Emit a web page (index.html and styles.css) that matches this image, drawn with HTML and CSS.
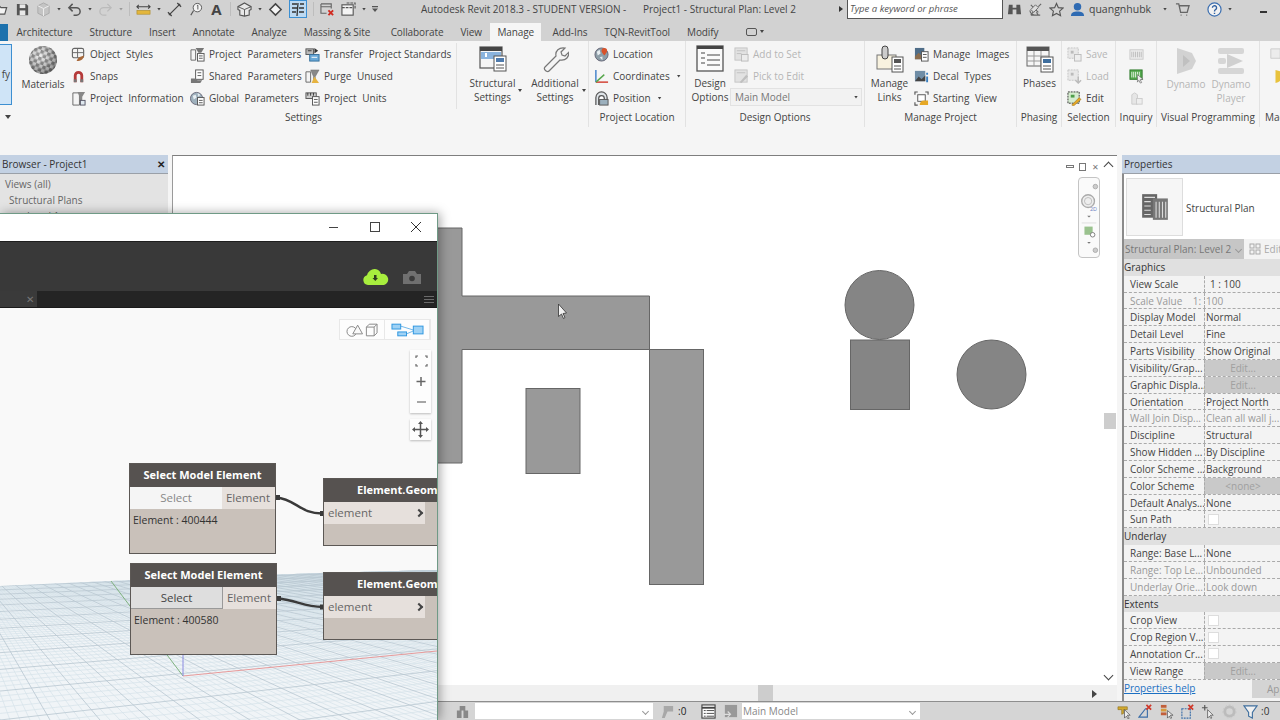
FILE: index.html
```html
<!DOCTYPE html>
<html lang="en">
<head>
  <meta charset="UTF-8">
  <title>Autodesk Revit 2018.3 - Project1 - Structural Plan: Level 2</title>
  <link rel="stylesheet" href="styles.css">
</head>
<body>
  <!-- icon sheet -->
  <svg class="icon-sheet" aria-hidden="true">
    <defs>
      <pattern id="checks" width="7" height="7" patternUnits="userSpaceOnUse" patternTransform="rotate(20)">
        <rect width="7" height="7" fill="#e4e4e4"/>
        <rect width="3.5" height="3.5" fill="#666"/>
        <rect x="3.5" y="3.5" width="3.5" height="3.5" fill="#666"/>
      </pattern>
      <radialGradient id="shade" cx="40%" cy="35%" r="70%">
        <stop offset="0" stop-color="#fff" stop-opacity=".35"/>
        <stop offset="1" stop-color="#333" stop-opacity=".5"/>
      </radialGradient>
    </defs>
    <symbol id="i-folder" viewBox="0 0 16 16"><path d="M1 4h5l2 2h6l-2 7H1z" fill="#f4f4f4" stroke="#555" stroke-width="1.3"/></symbol>
    <symbol id="i-save" viewBox="0 0 16 16"><path d="M2 2h10l2 2v10H2z" fill="#555"/><rect x="5" y="2.5" width="6" height="4" fill="#e8e8e8"/><rect x="5" y="9" width="6" height="5" fill="#e8e8e8"/></symbol>
    <symbol id="i-cube" viewBox="0 0 16 16"><path d="M8 1l6 3v8l-6 3-6-3V4z" fill="#c4c4c4" stroke="#aaa"/><path d="M2 4l6 3 6-3M8 7v8" fill="none" stroke="#eee"/></symbol>
    <symbol id="i-undo" viewBox="0 0 16 16"><path d="M6 2L2 6l4 4M2 6h8a4 4 0 0 1 0 8H7" fill="none" stroke="#555" stroke-width="1.6"/></symbol>
    <symbol id="i-redo" viewBox="0 0 16 16"><path d="M10 2l4 4-4 4M14 6H6a4 4 0 0 0 0 8h3" fill="none" stroke="#bbb" stroke-width="1.4"/></symbol>
    <symbol id="i-measure" viewBox="0 0 16 16"><path d="M1 5h14M3 3l-2 2 2 2M13 3l2 2-2 2" fill="none" stroke="#444" stroke-width="1.2"/><rect x="1" y="9" width="14" height="4" fill="#e3b63c" stroke="#a98620" stroke-width=".6"/></symbol>
    <symbol id="i-dim" viewBox="0 0 16 16"><path d="M2 14L14 2" stroke="#444" stroke-width="1.4"/><path d="M1 11l4 4M11 1l4 4" stroke="#444" stroke-width="1.4"/></symbol>
    <symbol id="i-tag" viewBox="0 0 16 16"><circle cx="10" cy="6" r="4.5" fill="#f4f4f4" stroke="#555"/><path d="M6 9l-3 5" stroke="#555" stroke-width="1.2"/><path d="M9.5 4l1-.6V8" fill="none" stroke="#555"/></symbol>
    <symbol id="i-house" viewBox="0 0 16 16"><path d="M8 1l7 4v3l-2 1v5l-5 1-5-1V9L1 8V5z" fill="#e8e8e8" stroke="#555" stroke-width="1.2"/><path d="M1 5l7 3 7-3M8 8v7" fill="none" stroke="#555"/></symbol>
    <symbol id="i-section" viewBox="0 0 16 16"><path d="M8 2l6 6-6 6-6-6z" fill="#f4f4f4" stroke="#444" stroke-width="1.6"/></symbol>
    <symbol id="i-thin" viewBox="0 0 18 18"><rect x=".5" y=".5" width="17" height="17" fill="#bcd9f2" stroke="#3b8fd3"/><path d="M3 4h5M3 8h5M3 12h4M11 4h4M10 8h5M10 12h5M9 3l-1 13" stroke="#333" stroke-width="1.3"/></symbol>
    <symbol id="i-closeview" viewBox="0 0 16 16"><path d="M1 2h11v5M1 2v10h6M1 5h11" fill="none" stroke="#666" stroke-width="1.2"/><path d="M9 9l5 5M14 9l-5 5" stroke="#d02a20" stroke-width="2"/></symbol>
    <symbol id="i-switch" viewBox="0 0 16 16"><rect x="1" y="3" width="12" height="11" fill="#f4f4f4" stroke="#555" stroke-width="1.2"/><path d="M1 6h12M6 1h9v7" fill="none" stroke="#555" stroke-width="1.2" stroke-dasharray="3 1"/></symbol>
    <symbol id="i-binoc" viewBox="0 0 16 16"><path d="M2 3h4v3h4V3h4l1 10h-5V8H6v5H1z" fill="#555"/></symbol>
    <symbol id="i-sat" viewBox="0 0 16 16"><path d="M3 3l8 8M2 9a6 6 0 0 0 5 5M11 5l3-3M3 14h10M6 10l-3 4M9 11l2 3" fill="none" stroke="#666" stroke-width="1.2"/><path d="M3 8l5-5 3 3-5 5z" fill="#ddd" stroke="#666"/></symbol>
    <symbol id="i-star" viewBox="0 0 16 16"><path d="M8 1.5l2 4.5 5 .5-3.700 3.300 1 4.800L8 12.200 3.700 14.600l1-4.800L1 6.500l5-.5z" fill="none" stroke="#555" stroke-width="1.2"/></symbol>
    <symbol id="i-user" viewBox="0 0 16 16"><circle cx="8" cy="5" r="4" fill="#2f6bb3"/><path d="M1 15c0-4 3-5 7-5s7 1 7 5z" fill="#2f6bb3"/></symbol>
    <symbol id="i-cart" viewBox="0 0 16 16"><path d="M1 2h3l2 9h7l2-7H5M6 14h1M12 14h1" fill="none" stroke="#666" stroke-width="1.4"/></symbol>
    <symbol id="i-help" viewBox="0 0 16 16"><circle cx="8" cy="8" r="7" fill="#f2f2f2" stroke="#3c6fb0" stroke-width="1.3"/><path d="M5.800 6.200a2.200 2.200 0 1 1 3.400 1.800c-.8.500-1.200 1-1.200 2M8 11.500v1.300" fill="none" stroke="#2f5f9f" stroke-width="1.500"/></symbol>

    <symbol id="i-styles" viewBox="0 0 16 16"><rect x="1.500" y="1.500" width="12" height="10" rx="2" fill="#f4f4f4" stroke="#666" stroke-width="1.2"/><path d="M7 1.500v10M1.500 6h12" stroke="#666"/><path d="M6 15c1-3 3-5 8-6-1 4-3 6-8 6z" fill="#a8683a"/></symbol>
    <symbol id="i-snaps" viewBox="0 0 16 16"><path d="M3 14V7a5 5 0 0 1 10 0v7h-3V7a2 2 0 0 0-4 0v7z" fill="#b53a3a"/><rect x="3" y="11" width="3" height="3" fill="#777"/><rect x="10" y="11" width="3" height="3" fill="#777"/></symbol>
    <symbol id="i-info" viewBox="0 0 16 16"><path d="M2 2h7v13H2z" fill="#f4f4f4" stroke="#666"/><path d="M7 1h8l-3 5v4H9V6z" fill="#888"/><rect x="10" y="10" width="5" height="5" fill="#dfe8ef" stroke="#556"/></symbol>
    <symbol id="i-params" viewBox="0 0 16 16"><path d="M1 3h5v11H1z" fill="#f4f4f4" stroke="#666"/><path d="M6 1h9l-3 5H9z" fill="#777"/><rect x="8" y="7" width="7" height="8" fill="#fff" stroke="#555"/><path d="M9.500 9.500h4M9.500 12h4" stroke="#555"/></symbol>
    <symbol id="i-shared" viewBox="0 0 16 16"><rect x="6" y="1" width="8" height="10" fill="#fff" stroke="#555"/><path d="M8 4h4M8 7h4" stroke="#555"/><path d="M1 10h4l3 2h5l-2 3H1z" fill="#777"/></symbol>
    <symbol id="i-global" viewBox="0 0 16 16"><circle cx="7" cy="8" r="6.500" fill="#9fb1bd" stroke="#667"/><path d="M3 5l3-1 1 3-3 2zM8 2l3 2-2 2z" fill="#e8eef2"/><rect x="8" y="7" width="7" height="8" fill="#fff" stroke="#555"/><path d="M9.500 10h4M9.500 12.500h4" stroke="#555"/></symbol>
    <symbol id="i-transfer" viewBox="0 0 16 16"><rect x="1" y="2" width="8" height="6" fill="#bbb" stroke="#555"/><path d="M3 4h4" stroke="#333"/><path d="M10 1l4 3-4 3z" fill="#333"/><rect x="5" y="8" width="10" height="7" fill="#6aa9d8" stroke="#356f9c"/><path d="M7 11h6" stroke="#fff"/></symbol>
    <symbol id="i-purge" viewBox="0 0 16 16"><path d="M1 3h5v11H1z" fill="#f4f4f4" stroke="#666"/><path d="M6 1h9l-4 7v6H9V8z" fill="#888" stroke="#666" stroke-width=".5"/><path d="M10 8l5 7H7z" fill="#e6b340"/></symbol>
    <symbol id="i-units" viewBox="0 0 16 16"><rect x="1" y="2" width="11" height="6" fill="#ccc" stroke="#555"/><path d="M3 2v3M6 2v3M9 2v3" stroke="#333"/><rect x="8" y="6" width="7" height="9" fill="#fff" stroke="#555"/><path d="M9.500 9h4M9.500 12h4" stroke="#555"/></symbol>
    <symbol id="i-location" viewBox="0 0 16 16"><circle cx="8" cy="8" r="7" fill="#8d9ea8" stroke="#667"/><path d="M3 5l3-2 1 4-3 2zM6 11l3-1v4z" fill="#e8eef2"/><path d="M11 1a3 3 0 0 1 3 3c0 2-3 5-3 5s-3-3-3-5a3 3 0 0 1 3-3z" fill="#d8522a"/></symbol>
    <symbol id="i-coords" viewBox="0 0 16 16"><path d="M2 1v13" stroke="#3c7ec9" stroke-width="1.500"/><path d="M2 14h13" stroke="#d0392b" stroke-width="1.500"/><path d="M2 14L11 6" stroke="#56a64b" stroke-width="1.500"/></symbol>
    <symbol id="i-position" viewBox="0 0 16 16"><path d="M2 15V7a6 6 0 0 1 12 0v8" fill="#dfe4e8" stroke="#555" stroke-width="1.300"/><path d="M5 15V8a3 3 0 0 1 6 0v7" fill="#fff" stroke="#555" stroke-width="1.300"/><rect x="6" y="9" width="9" height="6" fill="#9cb0bd" stroke="#555"/></symbol>
    <symbol id="i-addset" viewBox="0 0 16 16"><rect x="1" y="1" width="13" height="13" fill="#e2e2e2" stroke="#c4c4c4"/><path d="M3 4h9M3 7h5" stroke="#c0c0c0"/><rect x="8" y="8" width="7" height="7" fill="#ececec" stroke="#bbb"/></symbol>
    <symbol id="i-pick" viewBox="0 0 16 16"><rect x="1" y="1" width="13" height="13" fill="#e2e2e2" stroke="#c4c4c4"/><path d="M3 4h9" stroke="#c0c0c0"/><path d="M6 14l7-8 2 2-7 7z" fill="#bfbfbf"/></symbol>
    <symbol id="i-images" viewBox="0 0 16 16"><rect x="1" y="1" width="10" height="12" fill="#4f6d88"/><path d="M1 10l4-4 3 3 3-2v6H1z" fill="#8a6d4f"/><rect x="8" y="5" width="7" height="10" fill="#fff" stroke="#555"/><path d="M9.500 8h4M9.500 11h4" stroke="#555"/></symbol>
    <symbol id="i-decal" viewBox="0 0 16 16"><rect x="1" y="2" width="11" height="11" fill="#6f8da6"/><path d="M1 13l4-5 3 3 4-4v6z" fill="#444"/><path d="M13 4h2v2h-2zM13 8h2v6h-2z" fill="#3a7fc0"/></symbol>
    <symbol id="i-start" viewBox="0 0 16 16"><path d="M1 4V1h3M12 1h3v3M1 12v3h3" fill="none" stroke="#555" stroke-width="1.200"/><rect x="4" y="4" width="8" height="7" fill="#fff" stroke="#555"/><path d="M6 15c0-3 2-5 5-5h4v5z" fill="#e6a825"/></symbol>
    <symbol id="i-sel-save" viewBox="0 0 16 16"><rect x="1" y="1" width="11" height="11" fill="#e8e8e8" stroke="#c4c4c4" stroke-dasharray="2 1"/><rect x="4" y="4" width="3" height="3" fill="#bbb"/><rect x="8" y="8" width="7" height="7" fill="#eee" stroke="#bbb"/></symbol>
    <symbol id="i-sel-load" viewBox="0 0 16 16"><rect x="1" y="1" width="11" height="11" fill="#e8e8e8" stroke="#c4c4c4" stroke-dasharray="2 1"/><rect x="4" y="4" width="3" height="3" fill="#bbb"/><path d="M12 8v7M9 12l3 3 3-3" fill="none" stroke="#bbb" stroke-width="1.500"/></symbol>
    <symbol id="i-sel-edit" viewBox="0 0 16 16"><rect x="1" y="1" width="12" height="12" fill="#d6ecd0" stroke="#333" stroke-dasharray="2 1"/><rect x="4" y="4" width="4" height="3" fill="#4e9e4a"/><path d="M5 15l8-8 2 2-8 7z" fill="#e6a825" stroke="#8a6a20" stroke-width=".5"/></symbol>
    <symbol id="i-inq1" viewBox="0 0 16 16"><rect x="1" y="3" width="14" height="10" fill="#eee" stroke="#c8c8c8"/><path d="M3 5v6M5 5v6M7 5v6M9 5v6M11 5v6M13 5v6" stroke="#bbb"/></symbol>
    <symbol id="i-inq2" viewBox="0 0 16 16"><rect x="1" y="1" width="13" height="10" fill="#55a94f" stroke="#2f7a2b"/><path d="M3 3v6M5 3v6M7 3v6M9 3v6M11 3v6" stroke="#e5f3e3"/><path d="M9 6l6 5-3 .5 1.500 3-1.500.5-1.500-3L9 14z" fill="#eee" stroke="#555" stroke-width=".6"/></symbol>
    <symbol id="i-inq3" viewBox="0 0 16 16"><path d="M3 14V4l3-2 3 2v10z" fill="#e6e6e6" stroke="#ccc"/><rect x="8" y="8" width="6" height="6" fill="#eee" stroke="#ccc"/></symbol>
    <symbol id="i-lic" viewBox="0 0 16 16"><path d="M3 2h10v10H3z" fill="#ececec" stroke="#ccc"/></symbol>
    <symbol id="i-shield" viewBox="0 0 16 16"><path d="M8 1l7 2v5c0 4-3 6-7 7z" fill="#e8c23c"/></symbol>

    <symbol id="b-structural" viewBox="0 0 28 28"><rect x="1" y="2" width="22" height="21" fill="#f6f6f6" stroke="#555" stroke-width="1.200"/><rect x="1" y="2" width="22" height="4" fill="#444"/><rect x="2" y="7" width="20" height="7" fill="#8ab3dd"/><path d="M7 8v4" stroke="#fff" stroke-width="2"/><rect x="15" y="11" width="12" height="15" fill="#fff" stroke="#555"/><rect x="17" y="13" width="8" height="4" fill="#4f7bad"/><path d="M17 20h8M17 23h8" stroke="#555"/></symbol>
    <symbol id="b-wrench" viewBox="0 0 28 28"><path d="M24 3l-4 4 1 3 3 1 4-4c0 5-3 9-9 8L8 26c-2 2-6-2-4-4L15 11c-1-5 3-9 9-8z" fill="#f4f4f4" stroke="#777" stroke-width="1.200"/></symbol>
    <symbol id="b-design" viewBox="0 0 28 28"><rect x="1" y="1" width="26" height="25" fill="#fafafa" stroke="#555" stroke-width="1.300"/><rect x="1" y="1" width="26" height="3" fill="#444"/><path d="M5 8h4M5 13h4M5 18h4M11 10h13M11 15h13M11 20h13" stroke="#444" stroke-width="1.200"/></symbol>
    <symbol id="b-links" viewBox="0 0 28 28"><rect x="1" y="10" width="19" height="14" fill="#f8f2df" stroke="#777"/><rect x="6" y="1" width="6" height="13" rx="3" fill="#ccc" stroke="#444"/><rect x="16" y="12" width="11" height="15" fill="#fff" stroke="#555"/><rect x="18" y="14" width="7" height="4" fill="#555"/><path d="M18 21h7M18 24h7" stroke="#555"/></symbol>
    <symbol id="b-phases" viewBox="0 0 28 28"><rect x="1" y="2" width="22" height="19" fill="#f6f6f6" stroke="#666"/><rect x="1" y="2" width="22" height="4" fill="#555"/><path d="M1 11h22M1 16h22M8 6v15M15 6v15" stroke="#999"/><rect x="15" y="12" width="12" height="15" fill="#fff" stroke="#555"/><rect x="17" y="14" width="8" height="4" fill="#3f6f9f"/><path d="M17 21h8M17 24h8" stroke="#555"/></symbol>
    <symbol id="b-dynamo" viewBox="0 0 28 28"><path d="M5 1l15 5 4 8-4 8-15 5z" fill="#d2d2d2"/><path d="M11 8l7 6-7 6z" fill="#c0c0c0"/></symbol>
    <symbol id="b-player" viewBox="0 0 28 28"><rect x="1" y="1" width="26" height="6" rx="2" fill="#d6d6d6"/><rect x="1" y="21" width="26" height="6" rx="2" fill="#d6d6d6"/><rect x="1" y="11" width="8" height="6" rx="2" fill="#d6d6d6"/><path d="M10 7l16 7-16 7z" fill="#d0d0d0"/></symbol>
  </svg>

  <!-- title bar -->
  <header class="titlebar">
    <div class="qat">
      <svg class="ic ic-first"><use href="#i-folder"/></svg>
      <svg class="ic"><use href="#i-save"/></svg>
      <svg class="ic"><use href="#i-cube"/></svg>
      <span class="dd"></span>
      <svg class="ic"><use href="#i-undo"/></svg>
      <span class="dd"></span>
      <svg class="ic"><use href="#i-redo"/></svg>
      <span class="dd dd-faded"></span>
      <span class="qat-sep"></span>
      <svg class="ic"><use href="#i-measure"/></svg>
      <span class="dd"></span>
      <svg class="ic"><use href="#i-dim"/></svg>
      <svg class="ic"><use href="#i-tag"/></svg>
      <span class="qat-a">A</span>
      <span class="qat-sep"></span>
      <svg class="ic"><use href="#i-house"/></svg>
      <span class="dd"></span>
      <svg class="ic"><use href="#i-section"/></svg>
      <svg class="ic ic-18"><use href="#i-thin"/></svg>
      <span class="qat-sep"></span>
      <svg class="ic"><use href="#i-closeview"/></svg>
      <svg class="ic"><use href="#i-switch"/></svg>
      <span class="dd"></span>
      <span class="dd dd-bar"></span>
    </div>
    <div class="app-title">
      <span>Autodesk Revit 2018.3 - STUDENT VERSION -</span>
      <span class="app-doc">Project1 - Structural Plan: Level 2</span>
    </div>
    <span class="arrow-right"></span>
    <div class="search">Type a keyword or phrase</div>
    <div class="infobar">
      <svg class="ic"><use href="#i-binoc"/></svg>
      <svg class="ic"><use href="#i-sat"/></svg>
      <svg class="ic"><use href="#i-star"/></svg>
      <svg class="ic"><use href="#i-user"/></svg>
      <span class="username">quangnhubk</span>
      <span class="dd dd-user"></span>
      <svg class="ic ic-cart"><use href="#i-cart"/></svg>
      <svg class="ic ic-help"><use href="#i-help"/></svg>
      <span class="dd"></span>
      <span class="win-min"></span>
      <span class="win-restore"></span>
    </div>
  </header>

  <!-- ribbon tabs -->
  <nav class="tabs">
    <span class="tab-file"></span>
    <span class="tab">Architecture</span>
    <span class="tab">Structure</span>
    <span class="tab">Insert</span>
    <span class="tab">Annotate</span>
    <span class="tab">Analyze</span>
    <span class="tab tab-wide">Massing &amp; Site</span>
    <span class="tab">Collaborate</span>
    <span class="tab">View</span>
    <span class="tab tab-active">Manage</span>
    <span class="tab">Add-Ins</span>
    <span class="tab">TQN-RevitTool</span>
    <span class="tab">Modify</span>
    <span class="tab-toggle"><span class="tab-toggle-box"></span><span class="dd"></span></span>
  </nav>

  <!-- ribbon -->
  <section class="ribbon">
    <div class="panel panel-modify">
      <div class="panel-body"><div class="modify-btn">fy</div></div>
      <div class="panel-title"><span class="dd"></span></div>
    </div>

    <div class="panel panel-settings">
      <div class="panel-body">
        <div class="big big-materials">
          <svg class="material" viewBox="0 0 30 30"><circle cx="15" cy="15" r="14" fill="url(#checks)"/><circle cx="15" cy="15" r="14" fill="url(#shade)"/></svg>
          <span>Materials</span>
        </div>
        <div class="col col-a">
          <div class="item"><svg class="ic"><use href="#i-styles"/></svg><span>Object Styles</span></div>
          <div class="item"><svg class="ic"><use href="#i-snaps"/></svg><span>Snaps</span></div>
          <div class="item"><svg class="ic"><use href="#i-info"/></svg><span>Project Information</span></div>
        </div>
        <div class="col col-b">
          <div class="item"><svg class="ic"><use href="#i-params"/></svg><span>Project Parameters</span></div>
          <div class="item"><svg class="ic"><use href="#i-shared"/></svg><span>Shared Parameters</span></div>
          <div class="item"><svg class="ic"><use href="#i-global"/></svg><span>Global Parameters</span></div>
        </div>
        <div class="col col-c">
          <div class="item"><svg class="ic"><use href="#i-transfer"/></svg><span>Transfer <span class="tight">Project Standards</span></span></div>
          <div class="item"><svg class="ic"><use href="#i-purge"/></svg><span>Purge Unused</span></div>
          <div class="item"><svg class="ic"><use href="#i-units"/></svg><span>Project Units</span></div>
        </div>
        <div class="big big-structural">
          <svg class="ic-big"><use href="#b-structural"/></svg>
          <span>Structural<br>Settings</span><i class="dd dd-big"></i>
        </div>
        <div class="big big-additional">
          <svg class="ic-big"><use href="#b-wrench"/></svg>
          <span>Additional<br>Settings</span><i class="dd dd-big"></i>
        </div>
      </div>
      <div class="panel-title">Settings</div>
    </div>

    <div class="panel panel-location">
      <div class="panel-body">
        <div class="col">
          <div class="item"><svg class="ic"><use href="#i-location"/></svg><span>Location</span></div>
          <div class="item"><svg class="ic"><use href="#i-coords"/></svg><span>Coordinates</span><i class="dd"></i></div>
          <div class="item"><svg class="ic"><use href="#i-position"/></svg><span>Position</span><i class="dd"></i></div>
        </div>
      </div>
      <div class="panel-title">Project Location</div>
    </div>

    <div class="panel panel-design">
      <div class="panel-body">
        <div class="big big-design">
          <svg class="ic-big"><use href="#b-design"/></svg>
          <span>Design<br>Options</span>
        </div>
        <div class="col col-design">
          <div class="item item-off"><svg class="ic"><use href="#i-addset"/></svg><span>Add to Set</span></div>
          <div class="item item-off"><svg class="ic"><use href="#i-pick"/></svg><span>Pick to Edit</span></div>
          <div class="model-select"><span>Main Model</span><i class="dd"></i></div>
        </div>
      </div>
      <div class="panel-title">Design Options</div>
    </div>

    <div class="panel panel-project">
      <div class="panel-body">
        <div class="big big-links">
          <svg class="ic-big"><use href="#b-links"/></svg>
          <span>Manage<br>Links</span>
        </div>
        <div class="col">
          <div class="item"><svg class="ic"><use href="#i-images"/></svg><span>Manage Images</span></div>
          <div class="item"><svg class="ic"><use href="#i-decal"/></svg><span>Decal Types</span></div>
          <div class="item"><svg class="ic"><use href="#i-start"/></svg><span>Starting View</span></div>
        </div>
      </div>
      <div class="panel-title">Manage Project</div>
    </div>

    <div class="panel panel-phasing">
      <div class="panel-body">
        <div class="big big-phases">
          <svg class="ic-big"><use href="#b-phases"/></svg>
          <span>Phases</span>
        </div>
      </div>
      <div class="panel-title">Phasing</div>
    </div>

    <div class="panel panel-selection">
      <div class="panel-body">
        <div class="col">
          <div class="item item-off"><svg class="ic"><use href="#i-sel-save"/></svg><span>Save</span></div>
          <div class="item item-off"><svg class="ic"><use href="#i-sel-load"/></svg><span>Load</span></div>
          <div class="item"><svg class="ic"><use href="#i-sel-edit"/></svg><span>Edit</span></div>
        </div>
      </div>
      <div class="panel-title">Selection</div>
    </div>

    <div class="panel panel-inquiry">
      <div class="panel-body">
        <div class="col col-inquiry">
          <div class="item"><svg class="ic"><use href="#i-inq1"/></svg></div>
          <div class="item"><svg class="ic"><use href="#i-inq2"/></svg></div>
          <div class="item"><svg class="ic"><use href="#i-inq3"/></svg></div>
        </div>
      </div>
      <div class="panel-title">Inquiry</div>
    </div>

    <div class="panel panel-visual">
      <div class="panel-body">
        <div class="big big-dynamo big-off">
          <svg class="ic-big"><use href="#b-dynamo"/></svg>
          <span>Dynamo</span>
        </div>
        <div class="big big-player big-off">
          <svg class="ic-big"><use href="#b-player"/></svg>
          <span>Dynamo<br>Player</span>
        </div>
      </div>
      <div class="panel-title">Visual Programming</div>
    </div>

    <div class="panel panel-macros">
      <div class="panel-body">
        <div class="col col-macros">
          <div class="item"><svg class="ic"><use href="#i-lic"/></svg></div>
          <div class="item"><svg class="ic"><use href="#i-shield"/></svg></div>
        </div>
      </div>
      <div class="panel-title">Macros</div>
    </div>
  </section>

  <!-- workspace -->
  <main class="workspace">
    <aside class="browser">
      <div class="panel-head">Browser - Project1<span class="head-close">&#10005;</span></div>
      <ul class="tree">
        <li>Views (all)</li>
        <li class="tree-2">Structural Plans</li>
        <li class="tree-3">Level 1</li>
      </ul>
    </aside>

    <section class="view">
      <div class="view-main">
        <svg class="plan" viewBox="173 156 928 529">
          <path class="wall" d="M430 228H462V296H649.500V349.500H462V463H430Z"/>
          <rect class="wall" x="649.500" y="349.500" width="54" height="235"/>
          <rect class="wall" x="526" y="388.500" width="54" height="85"/>
          <circle class="column" cx="879.500" cy="305" r="34.500"/>
          <rect class="column" x="850.500" y="340" width="59" height="69.500"/>
          <circle class="column" cx="991.500" cy="374.500" r="34.500"/>
          <path class="cursor" d="M558.500 304V316.500L561.500 314L563.500 318.500L565 317.500L563 313.500L566.500 313Z"/>
        </svg>
        <div class="view-ctrl">
          <span class="ctrl-min"></span><span class="ctrl-max"></span><span class="ctrl-close">&#10005;</span>
        </div>
        <div class="navbar">
          <svg viewBox="0 0 22 80">
            <circle cx="18" cy="6" r="2.500" fill="#ccc" stroke="#aaa"/>
            <circle cx="10" cy="22" r="7" fill="#eee" stroke="#aaa" stroke-width="1.500"/>
            <circle cx="10" cy="22" r="4" fill="none" stroke="#bbb"/>
            <text x="12" y="33" class="nav-2d">2D</text>
            <path d="M9 38l2 2 2-2z" fill="#777"/>
            <path d="M3 46h16" stroke="#ddd"/>
            <rect x="6" y="50" width="9" height="9" fill="#9ac28e"/>
            <circle cx="15" cy="59" r="2.500" fill="#fff" stroke="#777"/>
            <path d="M9 67l2 2 2-2z" fill="#777"/>
            <circle cx="18" cy="76" r="2.500" fill="#ccc" stroke="#aaa"/>
          </svg>
        </div>
        <div class="vscroll">
          <span class="chev chev-up"></span>
          <span class="vthumb"></span>
          <span class="chev chev-down"></span>
        </div>
      </div>
      <div class="hscroll">
        <span class="hthumb"></span>
        <span class="chev-right"></span>
      </div>
    </section>

    <aside class="props">
      <div class="panel-head">Properties</div>
      <div class="props-body">
        <div class="type-box">
          <div class="type-thumb">
            <svg viewBox="0 0 28 28"><rect x="2" y="2" width="14" height="22" fill="#666"/><rect x="12" y="6" width="14" height="20" fill="#777"/><path d="M4 5h10M4 9h6M4 13h6M4 17h6M4 21h6M15 9v15M18 9v15M21 9v15M24 9v15" stroke="#ddd"/></svg>
          </div>
          <span>Structural Plan</span>
        </div>
        <div class="type-select">
          <div class="type-name"><span>Structural Plan: Level 2</span><i class="chev-small"></i></div>
          <div class="type-edit"><svg viewBox="0 0 12 12"><rect x="1" y="1" width="4" height="4" fill="none" stroke="#aaa"/><rect x="7" y="1" width="4" height="4" fill="none" stroke="#aaa"/><rect x="1" y="7" width="4" height="4" fill="none" stroke="#aaa"/><rect x="7" y="7" width="4" height="4" fill="none" stroke="#aaa"/></svg><span>Edit Type</span></div>
        </div>
        <div class="prop-group">Graphics</div>
        <div class="prop"><span class="prop-name">View Scale</span><span class="prop-val prop-pad">1 : 100</span></div>
        <div class="prop prop-off"><span class="prop-name">Scale Value &nbsp;&nbsp;&nbsp;1:</span><span class="prop-val">100</span></div>
        <div class="prop"><span class="prop-name">Display Model</span><span class="prop-val">Normal</span></div>
        <div class="prop"><span class="prop-name">Detail Level</span><span class="prop-val">Fine</span></div>
        <div class="prop"><span class="prop-name">Parts Visibility</span><span class="prop-val">Show Original</span></div>
        <div class="prop"><span class="prop-name">Visibility/Grap...</span><span class="prop-val prop-btn">Edit...</span></div>
        <div class="prop"><span class="prop-name">Graphic Displa...</span><span class="prop-val prop-btn">Edit...</span></div>
        <div class="prop"><span class="prop-name">Orientation</span><span class="prop-val">Project North</span></div>
        <div class="prop prop-off"><span class="prop-name">Wall Join Disp...</span><span class="prop-val">Clean all wall j...</span></div>
        <div class="prop"><span class="prop-name">Discipline</span><span class="prop-val">Structural</span></div>
        <div class="prop"><span class="prop-name">Show Hidden ...</span><span class="prop-val">By Discipline</span></div>
        <div class="prop"><span class="prop-name">Color Scheme ...</span><span class="prop-val">Background</span></div>
        <div class="prop"><span class="prop-name">Color Scheme</span><span class="prop-val prop-btn">&lt;none&gt;</span></div>
        <div class="prop"><span class="prop-name">Default Analys...</span><span class="prop-val">None</span></div>
        <div class="prop"><span class="prop-name">Sun Path</span><span class="prop-val"><i class="check"></i></span></div>
        <div class="prop-group">Underlay</div>
        <div class="prop"><span class="prop-name">Range: Base L...</span><span class="prop-val">None</span></div>
        <div class="prop prop-off"><span class="prop-name">Range: Top Le...</span><span class="prop-val">Unbounded</span></div>
        <div class="prop prop-off"><span class="prop-name">Underlay Orie...</span><span class="prop-val">Look down</span></div>
        <div class="prop-group">Extents</div>
        <div class="prop"><span class="prop-name">Crop View</span><span class="prop-val"><i class="check"></i></span></div>
        <div class="prop"><span class="prop-name">Crop Region V...</span><span class="prop-val"><i class="check"></i></span></div>
        <div class="prop"><span class="prop-name">Annotation Cr...</span><span class="prop-val"><i class="check"></i></span></div>
        <div class="prop"><span class="prop-name">View Range</span><span class="prop-val prop-btn">Edit...</span></div>
        <div class="props-foot">
          <a href="#" class="props-help">Properties help</a>
          <span class="apply">Apply</span>
        </div>
      </div>
    </aside>
  </main>

  <!-- status bar -->
  <footer class="statusbar">
    <svg class="ic ic-workset" viewBox="0 0 16 16"><path d="M2 7h5v8H2zM9 7h5v8H9zM5 2h6v5H5z" fill="#888"/></svg>
    <div class="status-select status-select-wide"><i class="chev-small"></i></div>
    <svg class="ic" viewBox="0 0 16 16"><path d="M4 2h10v6H8l-3 7H2l2-7z" fill="#a8a8a8"/></svg>
    <span class="status-count">:0</span>
    <svg class="ic ic-tree" viewBox="0 0 16 16"><rect x="1" y="1" width="14" height="14" fill="#fff" stroke="#444" stroke-width="1.200"/><path d="M1 4h14" stroke="#444" stroke-width="2"/><path d="M3 7h2M3 10h2M3 13h2M6 7h8M6 10h8M6 13h8" stroke="#444"/></svg>
    <svg class="ic" viewBox="0 0 16 16"><rect x="2" y="1" width="13" height="13" fill="#999"/><path d="M1 11h6M5 8l3 3-3 3" fill="none" stroke="#ddd" stroke-width="1.200"/></svg>
    <div class="status-select status-select-model"><span>Main Model</span><i class="chev-small"></i></div>
    <div class="status-tools">
      <svg class="ic" viewBox="0 0 16 16"><path d="M1 3h10v3H7v4l-2 1V6H1z" fill="#d2a92e" stroke="#85691a" stroke-width=".6"/><path d="M8 6v9l2-2 2 3 1-1-2-3h3z" fill="#eee" stroke="#444" stroke-width=".7"/></svg>
      <svg class="ic" viewBox="0 0 16 16"><path d="M1 14L8 5h2v9z" fill="none" stroke="#3b6ea8" stroke-width="1.200"/><path d="M9 1l5 5M14 1L9 6" stroke="#d0392b" stroke-width="1.800"/></svg>
      <svg class="ic" viewBox="0 0 16 16"><rect x="2" y="1" width="6" height="3" fill="#c25f3a"/><rect x="2" y="5" width="6" height="3" fill="#d69a3c"/><rect x="2" y="9" width="6" height="3" fill="#c25f3a"/><path d="M9 7v8l2-2 1.500 2.500 1-.7L12 12h3z" fill="#eee" stroke="#444" stroke-width=".7"/></svg>
      <svg class="ic" viewBox="0 0 16 16"><path d="M2 5h9v10H2z" fill="none" stroke="#3b6ea8" stroke-width="1.200" stroke-dasharray="2 1"/><path d="M9 1l5 5M14 1L9 6" stroke="#d0392b" stroke-width="1.800"/></svg>
      <svg class="ic" viewBox="0 0 16 16"><path d="M4 1v6M1 4h6" stroke="#555" stroke-width="1.200"/><path d="M7 6v9l2-2 1.500 2.500 1-.7L10 12h3z" fill="#eee" stroke="#444" stroke-width=".7"/></svg>
      <svg class="ic" viewBox="0 0 16 16"><circle cx="8" cy="8" r="5" fill="none" stroke="#bcbcbc" stroke-width="3"/><circle cx="8" cy="8" r="7" fill="none" stroke="#c8c8c8" stroke-dasharray="2 2"/></svg>
      <svg class="ic" viewBox="0 0 16 16"><path d="M1 2h14L10 9v6l-4-2V9z" fill="#f0f0f0" stroke="#3f6f9f" stroke-width="1.200"/></svg>
      <span class="status-zero">:0</span>
    </div>
  </footer>

  <!-- Dynamo window, floats over Revit -->
  <section class="dynamo">
    <div class="dyn-title">
      <span class="dyn-min"></span>
      <span class="dyn-max"></span>
      <svg class="dyn-close" viewBox="0 0 10 10"><path d="M0 0l10 10M10 0L0 10" stroke="#333"/></svg>
    </div>
    <div class="dyn-toolbar">
      <svg class="dyn-cloud" viewBox="0 0 26 16"><path d="M5 16a5 5 0 0 1-1-9.800A8 8 0 0 1 12 0a7 7 0 0 1 6 5 5.500 5.500 0 0 1 3 11z" fill="#a8ee3e"/><path d="M11 6h2.500v3H15l-2.700 3-2.800-3H11z" fill="#2f3b1e"/></svg>
      <svg class="dyn-camera" viewBox="0 0 18 13"><path d="M0 3h4l2-3h6l2 3h4v10H0z" fill="#707070"/><circle cx="9" cy="7.500" r="2.800" fill="#3a3a3a"/></svg>
    </div>
    <div class="dyn-strip">
      <div class="dyn-tab">&#10005;</div>
      <div class="dyn-menu"><i></i><i></i><i></i></div>
    </div>
    <div class="dyn-canvas">
      <svg class="dyn-floor" viewBox="0 308 437 412">
        <defs>
          <clipPath id="floor-clip"><polygon points="0,586 110,581 320,573 437,570 437,720 0,720"/></clipPath>
        </defs>
        <g clip-path="url(#floor-clip)">
          <rect x="0" y="560" width="437" height="160" fill="#f0f4f7"/>
          <path id="floor-minor" fill="none" stroke="#d5e2ea" stroke-width=".7"/>
          <path id="floor-major" fill="none" stroke="#b8c7d0" stroke-width=".8"/>
          <path d="M183 676L111 581" stroke="#7fb27f"/>
          <path d="M183 676L437 651" stroke="#e79a9a"/>
          <path d="M183 676V654" stroke="#8a8ae0"/>
        </g>
        <path class="wire" d="M276 497.500C296 499 300 514 323 513.500"/>
        <path class="wire" d="M277 598.500C298 600 302 607 323 607"/>
        <path class="nub" d="M276 495h4v5h-4zM320 511h4v5h-4zM277 596h4v5h-4zM320 604.500h4v5h-4z"/>
      </svg>

      <div class="node node-one">
        <div class="node-head">Select Model Element</div>
        <div class="node-row">
          <span class="node-btn">Select</span>
          <span class="node-port">Element</span>
        </div>
        <div class="node-text">Element : 400444</div>
      </div>
      <div class="node node-two">
        <div class="node-head">Select Model Element</div>
        <div class="node-row">
          <span class="node-btn node-btn-on">Select</span>
          <span class="node-port">Element</span>
        </div>
        <div class="node-text">Element : 400580</div>
      </div>
      <div class="node node-geom node-geom-one">
        <div class="node-head">Element.Geometry</div>
        <div class="node-input">element<i class="node-chev"></i></div>
      </div>
      <div class="node node-geom node-geom-two">
        <div class="node-head">Element.Geometry</div>
        <div class="node-input">element<i class="node-chev"></i></div>
      </div>

      <div class="dyn-views">
        <div class="dyn-view-btn">
          <svg viewBox="0 0 34 14"><circle cx="6" cy="8.500" r="5" fill="none" stroke="#888"/><path d="M7 11L12 2l5 9z" fill="#f9f9f9" stroke="#888"/><path d="M21 4h8v9h-8zM21 4l3-3h8v9l-3 3M29 4l3-3" fill="none" stroke="#888"/></svg>
        </div>
        <div class="dyn-view-btn">
          <svg viewBox="0 0 34 14"><rect x="1" y="1" width="9" height="5" fill="#9fd2f5" stroke="#2f97e0"/><rect x="7" y="9" width="9" height="4" fill="#9fd2f5" stroke="#2f97e0"/><rect x="23" y="3" width="10" height="8" fill="#9fd2f5" stroke="#2f97e0"/><path d="M10 3l13 4M16 11l7-3" stroke="#2f97e0" stroke-width=".7"/></svg>
        </div>
      </div>
      <div class="dyn-zoom">
        <svg viewBox="0 0 21 63">
          <path d="M6 8V6h2M15 6h2v2M6 14v2h2M17 14v2h-2" fill="none" stroke="#666" stroke-width="1.200"/>
          <path d="M11 27v9M6.500 31.500h9" stroke="#666" stroke-width="1.500"/>
          <path d="M7 52h9" stroke="#888" stroke-width="1.500"/>
        </svg>
      </div>
      <div class="dyn-pan">
        <svg viewBox="0 0 21 21"><path d="M10.500 4v13M4 10.500h13" stroke="#555" stroke-width="1.500"/><path d="M10.500 2l2.500 3h-5zM10.500 19l2.500-3h-5zM2 10.500l3-2.500v5zM19 10.500l-3-2.500v5z" fill="#555"/></svg>
      </div>
    </div>
  </section>

  <script src="grid.js"></script>
</body>
</html>
```

FILE: styles.css
```css
/* General Reset */
* {
  box-sizing: border-box;
  margin: 0;
  padding: 0;
}

body {
  width: 1280px;
  height: 720px;
  overflow: hidden;
  position: relative;
  display: flex;
  flex-direction: column;
  font-family: "Open Sans", "Noto Sans", sans-serif;
  font-size: 10px;
  color: #444;
  background-color: #f5f5f5;
}

.icon-sheet {
  position: absolute;
  width: 0;
  height: 0;
}

i {
  font-style: normal;
}

.ic {
  width: 15px;
  height: 15px;
  flex: none;
}

.ic-big {
  width: 28px;
  height: 28px;
  flex: none;
}

/* little drop arrow used everywhere */
.dd {
  display: inline-block;
  flex: none;
  width: 4px;
  height: 3px;
  background-color: #444;
  clip-path: polygon(0 0, 100% 0, 50% 100%);
}

.dd-faded {
  background-color: #999;
}

.dd-bar {
  background-color: #555;
  width: 6px;
  height: 6px;
  clip-path: polygon(0 0, 100% 0, 100% 20%, 0 20%, 0 40%, 100% 40%, 50% 100%, 0 40%);
}

/* Title bar */
.titlebar {
  height: 22px;
  flex: none;
  display: flex;
  align-items: flex-start;
  background-color: #d2d2d2;
}

.qat {
  width: 421px;
  height: 18px;
  display: flex;
  align-items: center;
  gap: 6px;
  flex: none;
}

.ic-first {
  margin-left: -7px;
  width: 16px;
}

.ic-18 {
  width: 18px;
  height: 18px;
}

.qat-sep {
  width: 1px;
  height: 14px;
  background-color: #bdbdbd;
  flex: none;
}

.qat-a {
  width: 15px;
  text-align: center;
  font-size: 15px;
  font-weight: 700;
  color: #444;
  flex: none;
}

.app-title {
  width: 418px;
  height: 19px;
  line-height: 19px;
  white-space: nowrap;
  flex: none;
}

.app-doc {
  margin-left: 14px;
}

.arrow-right {
  width: 4px;
  height: 6px;
  margin: 6px 4px 0 0;
  background-color: #333;
  clip-path: polygon(0 0, 100% 50%, 0 100%);
  flex: none;
}

.search {
  width: 156px;
  height: 19px;
  line-height: 18px;
  padding-left: 2px;
  background-color: #fff;
  border: 1px solid #555;
  border-top: 0;
  font-style: italic;
  font-size: 9.5px;
  color: #555;
  flex: none;
}

.infobar {
  height: 18px;
  display: flex;
  align-items: center;
  gap: 6px;
  margin-left: 4px;
  flex: none;
}

.username {
  margin-left: -2px;
  width: 57px;
  font-size: 10.5px;
}

.dd-user {
  margin-left: 11px;
}

.ic-cart {
  margin-left: 2px;
}

.ic-help {
  margin-left: 11px;
}

.win-min {
  width: 7px;
  height: 2px;
  background-color: #333;
  margin: 6px 0 0 22px;
}

.win-restore {
  width: 10px;
  height: 10px;
  border: 1px solid #444;
  margin-left: 10px;
}

/* Tabs */
.tabs {
  height: 19px;
  flex: none;
  display: flex;
  align-items: stretch;
  background-color: #d2d2d2;
  letter-spacing: -.1px;
}

.tab-file {
  width: 8px;
  margin-top: 2px;
  background-color: #1d71ad;
  flex: none;
}

.tab {
  padding: 0 8.5px;
  line-height: 20px;
  white-space: nowrap;
  flex: none;
}

.tab-wide {
  padding-right: 12px;
}

.tab-active {
  background-color: #f5f5f5;
  margin: 1px 3px 0 0;
  line-height: 19px;
  padding: 0 7px;
}

.tab-toggle {
  display: flex;
  align-items: center;
  gap: 3px;
  margin-left: 19px;
}

.tab-toggle-box {
  width: 11px;
  height: 8px;
  border: 1px solid #555;
  border-radius: 2px;
}

/* Ribbon */
.ribbon {
  height: 86px;
  flex: none;
  display: flex;
  background-color: #f5f5f5;
  overflow: hidden;
}

.panel {
  display: flex;
  flex-direction: column;
  flex: none;
  border-right: 1px solid #e2e2e2;
}

.panel-body {
  height: 68px;
  padding-top: 2px;
  display: flex;
  flex: none;
}

.panel-title {
  height: 18px;
  line-height: 16px;
  text-align: center;
  white-space: nowrap;
  overflow: hidden;
  flex: none;
}

.panel-modify { width: 17px; border-right: 0; }
.panel-settings { width: 572px; }
.panel-location { width: 97px; }
.panel-design { width: 179px; }
.panel-project { width: 152px; }
.panel-phasing { width: 45px; }
.panel-selection { width: 54px; }
.panel-inquiry { width: 41px; }
.panel-visual { width: 103px; }
.panel-macros { width: 20px; border-right: 0; }
.panel-macros .panel-title { text-align: left; padding-left: 5px; }
.panel-settings .panel-title { padding-left: 2px; }

.modify-btn {
  width: 12px;
  height: 61px;
  margin-top: 1px;
  background-color: #cfe4f7;
  border: 1px solid #3d8fd1;
  border-left: 0;
  line-height: 59px;
  text-align: right;
  padding-right: 1px;
  overflow: hidden;
}

.panel-modify .dd {
  width: 6px;
  height: 4px;
  margin: 6px 0 0 5px;
  float: left;
}

.col {
  display: flex;
  flex-direction: column;
  flex: none;
}

.item {
  height: 22px;
  display: flex;
  align-items: center;
  gap: 4px;
  white-space: nowrap;
  word-spacing: 3px;
  flex: none;
}

.tight {
  word-spacing: 0;
}

.item .dd {
  margin-left: 3px;
}

.item-off {
  color: #b5b5b5;
}

.big {
  display: flex;
  flex-direction: column;
  align-items: center;
  position: relative;
  text-align: center;
  line-height: 14px;
  flex: none;
}

.big .ic-big {
  margin: 2px 0 3px;
}

.big-off {
  color: #b5b5b5;
}

.big-materials { width: 52px; margin-right: 2px; }
.material { width: 30px; height: 30px; margin-top: 2px; flex: none; }
.big-materials span { margin-top: 2px; }

.col-a { width: 119px; }
.col-b { width: 115px; }
.col-c { width: 152px; border-right: 1px solid #e2e2e2; height: 66px; }

.big-structural { width: 71px; }
.big-additional { width: 54px; }

.dd-big {
  position: absolute;
  right: 6px;
  top: 46px;
}

.big-additional .dd-big { right: -4px; }

.panel-location .col { padding-left: 5px; }

.big-design { width: 48px; }
.col-design { width: 130px; }
.col-design .item { word-spacing: 0; }
.model-select {
  width: 132px;
  height: 18px;
  margin-top: 1px;
  margin-left: -4px;
  padding: 0 3px 0 4px;
  border: 1px solid #e2e2e2;
  background-color: #f2f2f2;
  color: #777;
  display: flex;
  align-items: center;
  justify-content: space-between;
  flex: none;
}

.big-links { width: 49px; }

.big-phases { width: 45px; }

.panel-selection .col { padding-left: 5px; }

.col-inquiry { width: 40px; align-items: center; }

.col-macros { padding-left: 8px; }

.big-dynamo { width: 52px; margin-left: 3px; padding-top: 4px; }
.big-player { width: 38px; padding-top: 4px; }
.big-dynamo .ic-big,
.big-player .ic-big { margin-top: 0; margin-bottom: 2px; }

/* Workspace */
.workspace {
  flex: 1;
  min-height: 0;
  display: flex;
  padding-top: 28px;
  background-color: #f5f5f5;
}

.panel-head {
  height: 19px;
  line-height: 18px;
  padding-left: 2px;
  background-color: #c3d1e3;
  border-bottom: 1px solid #9aa0a8;
  color: #333;
  display: flex;
  justify-content: space-between;
  flex: none;
}

.browser {
  width: 168px;
  flex: none;
  display: flex;
  flex-direction: column;
  background-color: #e3e3e3;
}

.head-close {
  margin-right: 3px;
  font-weight: 700;
  color: #222;
}

.tree {
  list-style: none;
  padding: 2px 0 0 5px;
  color: #666;
  line-height: 16px;
}

.tree-2 { padding-left: 4px; }
.tree-3 { padding-left: 22px; }

.view {
  width: 945px;
  margin-left: 4px;
  flex: none;
  display: flex;
  flex-direction: column;
  background-color: #fff;
  border-top: 1px solid #7e7e7e;
  border-left: 1px solid #9a9a9a;
}

.view-main {
  flex: 1;
  min-height: 0;
  position: relative;
}

.plan {
  position: absolute;
  left: 0;
  top: 0;
  width: 928px;
  height: 529px;
}

.wall {
  fill: #999;
  stroke: #666;
  stroke-width: 1;
}

.column {
  fill: #858585;
  stroke: #666;
  stroke-width: 1;
}

.cursor {
  fill: #f2f2f2;
  stroke: #333;
  stroke-width: .8;
}

.view-ctrl {
  position: absolute;
  top: 5px;
  left: 893px;
  display: flex;
  align-items: center;
  gap: 5px;
}

.ctrl-min { width: 8px; height: 3px; border: 1px solid #777; }
.ctrl-max { width: 7px; height: 8px; border: 1px solid #777; }
.ctrl-close { font-size: 8px; color: #777; margin-left: 1px; }

.navbar {
  position: absolute;
  top: 21px;
  left: 905px;
  width: 22px;
  height: 81px;
  background-color: #fafafa;
  border: 1px solid #c4c4c4;
  border-radius: 4px;
}

.navbar svg {
  display: block;
  width: 100%;
  height: 100%;
}

.nav-2d {
  font-family: "Open Sans", sans-serif;
  font-size: 6px;
  fill: #6a7fc0;
}

.vscroll {
  position: absolute;
  top: 0;
  right: 0;
  bottom: 0;
  width: 17px;
  background-color: #fff;
}

.vthumb {
  position: absolute;
  left: 4px;
  top: 257px;
  width: 12px;
  height: 16px;
  background-color: #cdcdcd;
}

.chev {
  position: absolute;
  left: 5px;
  width: 7px;
  height: 7px;
  border-left: 1.5px solid #444;
  border-top: 1.5px solid #444;
}

.chev-up { top: 7px; transform: rotate(45deg); }
.chev-down { bottom: 6px; transform: rotate(225deg); }

.hscroll {
  height: 16px;
  flex: none;
  position: relative;
  background-color: #f0f0f0;
}

.hthumb {
  position: absolute;
  left: 585px;
  top: 0;
  width: 15px;
  height: 16px;
  background-color: #cdcdcd;
}

.chev-right {
  position: absolute;
  left: 919px;
  top: 5px;
  width: 0;
  height: 0;
  border-left: 5px solid #444;
  border-top: 4px solid transparent;
  border-bottom: 4px solid transparent;
}

/* Properties */
.props {
  width: 158px;
  margin-left: 5px;
  flex: none;
  display: flex;
  flex-direction: column;
}

.props-body {
  flex: 1;
  min-height: 0;
  border-left: 2px solid #8b8b8b;
  background-color: #f3f3f3;
  display: flex;
  flex-direction: column;
}

.type-box {
  height: 65px;
  display: flex;
  align-items: center;
  padding-left: 2px;
  background-color: #fff;
  flex: none;
}

.type-box span {
  padding-top: 2px;
}

.type-thumb {
  width: 57px;
  height: 58px;
  margin-right: 3px;
  background-color: #f6f6f6;
  border: 1px solid #ddd;
  display: flex;
  align-items: center;
  justify-content: center;
}

.type-thumb svg {
  width: 30px;
  height: 30px;
}

.type-select {
  height: 20px;
  display: flex;
  background-color: #f3f3f3;
  flex: none;
}

.type-name {
  width: 120px;
  padding: 0 3px 0 1px;
  background-color: #c6c6c6;
  color: #777;
  line-height: 19px;
  white-space: nowrap;
  overflow: hidden;
  display: flex;
  justify-content: space-between;
  align-items: center;
  flex: none;
}

.type-name span {
  width: 108px;
  overflow: hidden;
  flex: none;
}

.chev-small {
  width: 5px;
  height: 5px;
  border-right: 1px solid #999;
  border-bottom: 1px solid #999;
  transform: rotate(45deg);
  flex: none;
}

.type-edit {
  display: flex;
  align-items: center;
  gap: 3px;
  padding-left: 5px;
  color: #aaa;
  white-space: nowrap;
}

.type-edit svg {
  width: 12px;
  height: 12px;
  flex: none;
}

.prop-group {
  height: 16.83px;
  line-height: 16px;
  background-color: #e0e0e0;
  color: #333;
  flex: none;
}

.prop {
  height: 16.83px;
  display: flex;
  border-bottom: 1px dashed #aaa;
  white-space: nowrap;
  flex: none;
}

.prop-name {
  width: 80px;
  padding-left: 6px;
  overflow: hidden;
  display: flex;
  align-items: center;
  flex: none;
}

.prop-val {
  flex: 1;
  padding-left: 1px;
  border-left: 1px dashed #aaa;
  overflow: hidden;
  display: flex;
  align-items: center;
}

.prop-pad {
  padding-left: 5px;
}

.prop-off {
  color: #999;
}

.prop-btn {
  background-color: #c9c9c9;
  color: #a0a0a0;
  justify-content: center;
}

.check {
  width: 11px;
  height: 11px;
  margin-left: 2px;
  background-color: #fff;
  border: 1px solid #ddd;
  display: block;
}

.props-foot {
  flex: 1;
  display: flex;
  align-items: flex-start;
  justify-content: space-between;
  background-color: #f3f3f3;
}

.props-help {
  color: #1b6fc2;
  line-height: 16px;
}

.apply {
  width: 50px;
  height: 18px;
  line-height: 18px;
  padding-left: 15px;
  background-color: #d4d4d4;
  color: #999;
  overflow: hidden;
  white-space: nowrap;
  margin-right: -22px;
}

/* Status bar */
.statusbar {
  height: 19px;
  flex: none;
  display: flex;
  align-items: center;
  padding-left: 455px;
  background-color: #d5d5d5;
  border-top: 1px solid #8e8e8e;
}

.ic-workset { margin-right: 5px; }

.status-select {
  width: 178px;
  height: 16px;
  padding: 0 5px 0 1px;
  background-color: #fff;
  color: #888;
  line-height: 16px;
  display: flex;
  align-items: center;
  justify-content: space-between;
  flex: none;
}

.status-select-wide {
  justify-content: flex-end;
  margin-right: 7px;
}

.status-select-model {
  margin-left: 4px;
}

.status-count {
  width: 15px;
  margin-left: 3px;
  color: #222;
  flex: none;
}

.ic-tree {
  margin: 0 7px 0 8px;
}

.status-tools {
  margin-left: 197px;
  display: flex;
  align-items: center;
  gap: 6px;
  flex: none;
}

.status-zero {
  margin-left: -3px;
  color: #333;
}

/* Dynamo window */
.dynamo {
  position: absolute;
  left: 0;
  top: 213px;
  width: 438px;
  height: 507px;
  display: flex;
  flex-direction: column;
  background-color: #fff;
  border-top: 1px solid #6f9a86;
  border-right: 1px solid #6f9a86;
  box-shadow: 2px 0 10px rgba(0, 0, 0, .35);
}

.dyn-title {
  height: 28px;
  flex: none;
  position: relative;
  background-color: #fff;
  border-bottom: 1px solid #1e1e1e;
}

.dyn-min {
  position: absolute;
  left: 329px;
  top: 13px;
  width: 9px;
  height: 1px;
  background-color: #444;
}

.dyn-max {
  position: absolute;
  left: 370px;
  top: 8px;
  width: 10px;
  height: 10px;
  border: 1px solid #444;
}

.dyn-close {
  position: absolute;
  left: 411px;
  top: 8px;
  width: 10px;
  height: 10px;
}

.dyn-toolbar {
  height: 49px;
  flex: none;
  display: flex;
  align-items: flex-end;
  justify-content: flex-end;
  gap: 14px;
  padding: 0 16px 6px 0;
  background-color: #393939;
}

.dyn-cloud {
  width: 26px;
  height: 16px;
}

.dyn-camera {
  width: 18px;
  height: 13px;
  margin-bottom: 1px;
}

.dyn-strip {
  height: 17px;
  flex: none;
  display: flex;
  background-color: #242424;
  border-bottom: 1px solid #1a1a1a;
}

.dyn-tab {
  width: 37px;
  padding-right: 3px;
  background-color: #3a3a3a;
  color: #777;
  line-height: 16px;
  text-align: right;
  flex: none;
}

.dyn-menu {
  margin-left: auto;
  margin-right: 3px;
  width: 10px;
  display: flex;
  flex-direction: column;
  justify-content: center;
  gap: 2px;
}

.dyn-menu i {
  height: 1px;
  background-color: #6a6a6a;
  display: block;
}

.dyn-canvas {
  flex: 1;
  min-height: 0;
  position: relative;
  overflow: hidden;
  background-color: #f9f9f9;
}

.dyn-floor {
  position: absolute;
  left: 0;
  top: 0;
  width: 437px;
  height: 412px;
}

.wire {
  fill: none;
  stroke: #3a3a3a;
  stroke-width: 2.4;
}

.nub {
  fill: #3a3a3a;
}

.node {
  position: absolute;
  width: 147px;
  background-color: #c9c1ba;
  border: 1px solid #5c5855;
  color: #333;
}

.node-one { left: 129px; top: 155px; height: 91px; }
.node-two { left: 130px; top: 255px; height: 92px; }
.node-geom { left: 323px; width: 130px; height: 68px; }
.node-geom-one { top: 170px; }
.node-geom-two { top: 264px; }

.node-head {
  height: 23px;
  line-height: 22px;
  text-align: center;
  background-color: #565250;
  color: #fff;
  font-size: 11px;
  font-weight: 700;
  white-space: nowrap;
}

.node-geom .node-head {
  text-align: left;
  padding-left: 33px;
}

.node-row {
  height: 22px;
  display: flex;
  line-height: 22px;
  font-size: 11.5px;
}

.node-btn {
  width: 92px;
  text-align: center;
  background-color: #f5f5f5;
  color: #888;
  flex: none;
}

.node-btn-on {
  background-color: #dedede;
  color: #444;
  border-bottom: 1px solid #999;
  border-right: 1px solid #999;
}

.node-port {
  flex: 1;
  text-align: right;
  padding-right: 5px;
  background-color: #e6e0dc;
  color: #666;
}

.node-text {
  padding-left: 3px;
  line-height: 22px;
  font-size: 10.5px;
  color: #333;
}

.node-input {
  width: 101px;
  height: 22px;
  padding-left: 4px;
  line-height: 22px;
  background-color: #e6e0dc;
  color: #666;
  font-size: 11.5px;
  position: relative;
}

.node-chev {
  position: absolute;
  right: 3px;
  top: 8px;
  width: 6px;
  height: 6px;
  border-top: 2px solid #444;
  border-right: 2px solid #444;
  transform: rotate(45deg);
}

.dyn-views {
  position: absolute;
  left: 339px;
  top: 11px;
  width: 92px;
  height: 21px;
  display: flex;
  background-color: #fdfdfd;
  border: 1px solid #e8e8e8;
}

.dyn-view-btn {
  flex: 1;
  display: flex;
  align-items: center;
  justify-content: center;
  border-right: 1px solid #e8e8e8;
}

.dyn-view-btn svg {
  width: 33px;
  height: 14px;
}

.dyn-zoom,
.dyn-pan {
  position: absolute;
  left: 410px;
  width: 21px;
  background-color: #fdfdfd;
  box-shadow: 0 1px 2px rgba(0, 0, 0, .25);
}

.dyn-zoom { top: 42px; height: 63px; }
.dyn-pan { top: 111px; height: 21px; }

.dyn-zoom svg,
.dyn-pan svg {
  display: block;
  width: 100%;
  height: 100%;
}
```

FILE: grid.js
```js
// Ground grid behind the Dynamo graph. Each family of lines runs to its own vanishing point.
const leftVanish = { x: -60, y: 530 };
const rightVanish = { x: 1773, y: 520 };
const groundY = 720;

function family(vanish, from, to, step, keep) {
  let d = '';
  let i = 0;
  for (let x = from; x <= to; x += step) {
    if (keep(i)) {
      const ex = vanish.x + (x - vanish.x) * 1.2;
      const ey = vanish.y + (groundY - vanish.y) * 1.2;
      d += `M${vanish.x} ${vanish.y}L${ex} ${ey}`;
    }
    i++;
  }
  return d;
}

const isMajor = (i) => i % 5 === 0;
const isMinor = (i) => i % 5 !== 0;

document.getElementById('floor-minor').setAttribute('d',
  family(leftVanish, -1400, 3000, 10, isMinor) + family(rightVanish, -6000, 1700, 60, isMinor));
document.getElementById('floor-major').setAttribute('d',
  family(leftVanish, -1400, 3000, 10, isMajor) + family(rightVanish, -6000, 1700, 60, isMajor));
```
